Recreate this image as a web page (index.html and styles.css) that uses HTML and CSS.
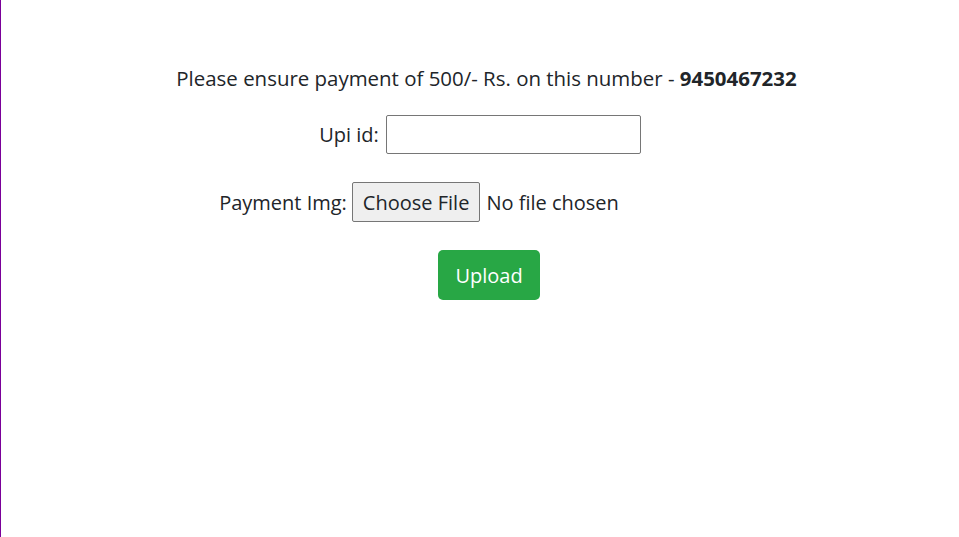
FILE: index.html
```html
<!DOCTYPE html>
<html>
<head>
<meta charset="utf-8">
<link rel="stylesheet" href="styles.css">
</head>
<body>
<div class="page">
  <form class="form">
    <p class="notice">Please ensure payment of 500/- Rs. on this number - <b>9450467232</b></p>
    <div class="row row-upi">
      <label class="label">Upi id:</label>
      <input class="text-input" type="text">
    </div>
    <div class="row row-img">
      <label class="label">Payment Img:</label>
      <input class="file-input" type="file">
    </div>
    <button class="btn-upload" type="button">Upload</button>
  </form>
</div>
</body>
</html>
```
FILE: styles.css
```css
html, body {
  margin: 0;
  padding: 0;
  height: 100%;
  background: #fff;
}
body {
  border-left: 1px solid #7a0099;
  box-sizing: border-box;
  font-family: "Open Sans", "Noto Sans", sans-serif;
  font-size: 20px;
  color: #212529;
}
.page {
  padding-top: 63px;
}
.form {
  display: flex;
  flex-direction: column;
  align-items: center;
}
.notice {
  margin: 0 0 0 13px;
  line-height: 30px;
  font-size: 20.45px;
}
.notice b {
  font-weight: 700;
}
.row {
  display: flex;
  align-items: center;
  gap: 5px;
}
.row-upi {
  margin-top: 22px;
}
.row-img {
  margin-top: 28px;
}
.text-input {
  width: 255px;
  height: 39px;
  box-sizing: border-box;
  border: 1px solid #767676;
  border-radius: 2px;
  font: inherit;
  margin: 0 0 0 2px;
  padding: 0 4px;
}
.file-input {
  width: 389px;
  font: inherit;
  color: #212529;
  margin: 0;
}
.file-input::file-selector-button {
  height: 40px;
  font: inherit;
  padding: 0 10px;
  margin-right: 6px;
  background: #efefef;
  border: 1px solid #767676;
  border-radius: 2px;
  color: #212529;
}
.btn-upload {
  margin: 28px 0 0 18px;
  width: 102px;
  height: 50px;
  background: #28a745;
  color: #fff;
  border: none;
  border-radius: 5px;
  font: inherit;
  padding: 0;
}
```
